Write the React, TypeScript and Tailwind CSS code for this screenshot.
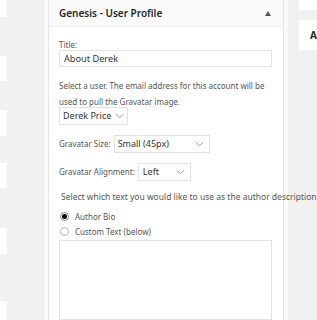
import React from "react";

const Chevron = () => (
  <svg width="9" height="6" viewBox="0 0 9 6" fill="none" className="shrink-0">
    <path d="M0.8 1.2 L4.5 4.6 L8.2 1.2" stroke="#8c8f94" strokeWidth="0.9" />
  </svg>
);

export default function App() {
  const font = { fontFamily: '"Noto Sans", "Open Sans", sans-serif' };
  return (
    <div className="w-[317px] h-[320px] overflow-hidden flex bg-[#f1f1f1] text-[#555]" style={font}>
      {/* left column */}
      <div className="w-[43px] shrink-0 flex flex-col">
        <div className="w-[7px] h-[18px] bg-white" />
        <div className="w-[7px] h-[26px] bg-white mt-[39px]" />
        <div className="w-[7px] h-[27px] bg-white mt-[29px]" />
        <div className="w-[7px] h-[27px] bg-white mt-[27px]" />
        <div className="w-[7px] h-[27px] bg-white mt-[40px]" />
        <div className="w-[7px] h-[20px] bg-white mt-[47px]" />
      </div>
      {/* middle */}
      <div className="w-[245px] shrink-0 border-l border-[#e8e8e8] bg-[#fafafa] pl-[4px] pr-[4px]">
        <div className="w-[236px] h-[320px] border-x border-[#e5e5e5] bg-white flex flex-col">
          <div className="h-[27px] shrink-0 bg-[#fafafa] border-b border-[#eeeeee] flex items-center justify-between pl-[10px] pr-[12px]">
            <span className="text-[10px] font-semibold text-[#23282d]">Genesis - User Profile</span>
            <svg width="6" height="5" viewBox="0 0 6 5"><path d="M0 5 L3 0 L6 5 Z" fill="#555" /></svg>
          </div>
          <div className="pl-[10px] flex flex-col text-[8px] leading-[16px]">
            <div className="mt-[10px] h-[16px]">Title:</div>
            <div className="mt-[-3px] w-[213px] h-[17px] border border-[#e3e3e3] flex items-center pl-[4px] text-[9.2px] text-[#333]">
              About Derek
            </div>
            <div className="mt-[11px] w-[225px] whitespace-nowrap">
              <div>Select a user. The email address for this account will be</div>
              <div>used to pull the Gravatar image.</div>
            </div>
            <div className="mt-[-3px] self-start h-[18px] border border-[#e3e3e3] flex items-center gap-[4px] pl-[3px] pr-[3px] text-[9px] text-[#333] whitespace-nowrap">
              <span>Derek Price</span>
              <Chevron />
            </div>
            <div className="mt-[10px] flex items-center gap-[3px]">
              <span>Gravatar Size:</span>
              <div className="w-[96px] h-[18px] border border-[#e3e3e3] flex items-center justify-between pl-[3px] pr-[5px] text-[9px] text-[#333]">
                <span>Small (45px)</span>
                <Chevron />
              </div>
            </div>
            <div className="mt-[10px] flex items-center gap-[3px]">
              <span>Gravatar Alignment:</span>
              <div className="w-[53px] h-[18px] border border-[#e3e3e3] flex items-center justify-between pl-[4px] pr-[5px] text-[9px] text-[#333]">
                <span>Left</span>
                <Chevron />
              </div>
            </div>
            <div className="mt-[8px] ml-[2px] whitespace-nowrap text-[8.5px]">
              Select which text you would like to use as the author description
            </div>
            <div className="mt-[4px] ml-[1px] flex items-center gap-[6px] h-[15px]">
              <span className="w-[9px] h-[9px] rounded-full border border-[#8c8c8c] flex items-center justify-center">
                <span className="w-[5px] h-[5px] rounded-full bg-black" />
              </span>
              <span>Author Bio</span>
            </div>
            <div className="ml-[1px] flex items-center gap-[6px] h-[15px]">
              <span className="w-[9px] h-[9px] rounded-full border border-[#b5b5b5]" />
              <span>Custom Text (below)</span>
            </div>
            <div className="mt-[1px] w-[213px] h-[80px] border border-[#e3e3e3]" />
          </div>
        </div>
      </div>
      {/* right column */}
      <div className="flex-1 flex flex-col items-end">
        <div className="w-[18px] h-[10px] bg-white" />
        <div className="w-[18px] h-[30px] bg-white mt-[10px] flex items-center pl-[11px] text-[10px] font-bold text-[#23282d]">
          A
        </div>
      </div>
    </div>
  );
}
